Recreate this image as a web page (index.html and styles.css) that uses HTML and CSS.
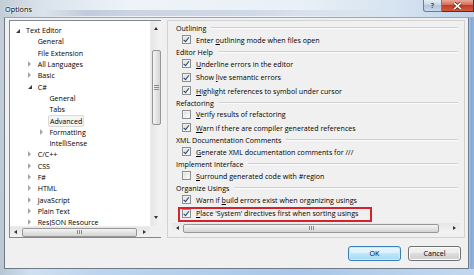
FILE: index.html
```html
<!DOCTYPE html>
<html lang="en">
<head>
    <meta charset="UTF-8">
    <title>Options</title>
    <link rel="stylesheet" href="styles.css">
</head>
<body>
<div class="window">
    <div class="titlebar">
        <span class="title">Options</span>
        <div class="caption">
            <span class="cap-help">?</span>
            <span class="cap-close">
                <svg width="11" height="8" viewBox="0 0 11 8"><path d="M2 0.8 L9 7.2 M9 0.8 L2 7.2" stroke="#6b1d14" stroke-width="3" fill="none"/><path d="M2 0.8 L9 7.2 M9 0.8 L2 7.2" stroke="#fff" stroke-width="1.6" fill="none"/></svg>
            </span>
        </div>
    </div>

    <div class="middle">
        <div class="frame-left"></div>
        <div class="client">
            <div class="panes">
                <!-- 左侧树 -->
                <div class="tree">
                    <div class="tree-view">
                        <div class="node l0"><i class="exp open"></i><span>Text Editor</span></div>
                        <div class="node l1"><i class="exp"></i><span>General</span></div>
                        <div class="node l1"><i class="exp"></i><span>File Extension</span></div>
                        <div class="node l1"><i class="exp shut"></i><span>All Languages</span></div>
                        <div class="node l1"><i class="exp shut"></i><span>Basic</span></div>
                        <div class="node l1"><i class="exp open"></i><span>C#</span></div>
                        <div class="node l2"><i class="exp"></i><span>General</span></div>
                        <div class="node l2"><i class="exp"></i><span>Tabs</span></div>
                        <div class="node l2"><i class="exp"></i><span class="sel">Advanced</span></div>
                        <div class="node l2"><i class="exp shut"></i><span>Formatting</span></div>
                        <div class="node l2"><i class="exp"></i><span>IntelliSense</span></div>
                        <div class="node l1"><i class="exp shut"></i><span>C/C++</span></div>
                        <div class="node l1"><i class="exp shut"></i><span>CSS</span></div>
                        <div class="node l1"><i class="exp shut"></i><span>F#</span></div>
                        <div class="node l1"><i class="exp shut"></i><span>HTML</span></div>
                        <div class="node l1"><i class="exp shut"></i><span>JavaScript</span></div>
                        <div class="node l1"><i class="exp shut"></i><span>Plain Text</span></div>
                        <div class="node l1"><i class="exp shut"></i><span>ResJSON Resource</span></div>
                    </div>
                    <div class="vscroll">
                        <i class="arr up"></i>
                        <div class="vthumb"><b></b><b></b><b></b></div>
                        <i class="arr down"></i>
                    </div>
                    <div class="hscroll tree-h">
                        <i class="arr left"></i>
                        <div class="hthumb"><b></b><b></b><b></b></div>
                        <i class="arr right"></i>
                    </div>
                    <div class="corner"></div>
                </div>

                <!-- 右侧选项页 -->
                <div class="page">
                    <div class="grp">Outlining</div>
                    <div class="opt"><i class="cb on"></i><span>Enter <u>o</u>utlining mode when files open</span></div>

                    <div class="grp">Editor Help</div>
                    <div class="opt"><i class="cb on"></i><span><u>U</u>nderline errors in the editor</span></div>
                    <div class="opt"><i class="cb on"></i><span>Show <u>l</u>ive semantic errors</span></div>
                    <div class="opt"><i class="cb on"></i><span><u>H</u>ighlight references to symbol under cursor</span></div>

                    <div class="grp">Refactoring</div>
                    <div class="opt"><i class="cb"></i><span><u>V</u>erify results of refactoring</span></div>
                    <div class="opt"><i class="cb on"></i><span><u>W</u>arn if there are compiler generated references</span></div>

                    <div class="grp">XML Documentation Comments</div>
                    <div class="opt"><i class="cb on"></i><span><u>G</u>enerate XML documentation comments for ///</span></div>

                    <div class="grp">Implement Interface</div>
                    <div class="opt"><i class="cb"></i><span><u>S</u>urround generated code with #region</span></div>

                    <div class="grp">Organize Usings</div>
                    <div class="opt"><i class="cb on"></i><span>Warn if <u>b</u>uild errors exist when organizing usings</span></div>
                    <div class="opt"><i class="cb on"></i><span><u>P</u>lace 'System' directives first when sorting usings</span></div>

                    <div class="hscroll page-h">
                        <i class="arr left"></i>
                        <div class="hthumb"><b></b><b></b><b></b></div>
                        <i class="arr right"></i>
                    </div>

                    <div class="mark"></div>
                </div>
            </div>

            <div class="buttons">
                <span class="btn default">OK</span>
                <span class="btn">Cancel</span>
            </div>
        </div>
        <div class="frame-right"></div>
    </div>

    <div class="frame-bottom"></div>
</div>
</body>
</html>
```

FILE: styles.css
```css
*{
    padding:0;
    margin:0;
    box-sizing:border-box;
}

body{
    width:474px;
    height:275px;
    overflow:hidden;
    font-family:"Open Sans","Noto Sans",sans-serif;
    font-size:7.1px;
    color:#000;
    background:#c9d6e4;
}

.window{
    width:474px;
    height:275px;
    display:flex;
    flex-direction:column;
}

/* 标题栏 */
.titlebar{
    height:17px;
    display:flex;
    align-items:flex-start;
    background:
        linear-gradient(90deg, rgba(70,90,140,0) 0, rgba(70,90,140,.22) 12%, rgba(70,90,140,.16) 60%, rgba(70,90,140,0) 100%) 45px 10px / 340px 6px no-repeat,
        linear-gradient(90deg, #c3cdd7 0, #d9e2eb 40px, #eef3f8 130px, #e9f0f7 300px, #d3e1ef 410px, #bfd3ea 474px);
}

.title{
    margin:5px 0 0 5px;
    font-size:7.3px;
    line-height:9px;
    text-shadow:0 0 3px #fff, 0 0 2px #fff;
}

.caption{
    margin-left:auto;
    display:flex;
    height:12px;
}

.cap-help{
    width:19px;
    height:12px;
    border:1px solid #6d7c8f;
    border-top:none;
    border-radius:0 0 0 3px;
    background:linear-gradient(#e6eef6, #c4d4e5 50%, #b3c6dc 50%, #c9d9ea);
    color:#3d4a5a;
    font-size:7px;
    font-weight:bold;
    line-height:11px;
    text-align:center;
}

.cap-close{
    width:32px;
    height:12px;
    border:1px solid #5e2a24;
    border-top:none;
    border-left:none;
    background:linear-gradient(#e9a99b, #d66a55 45%, #c23c26 50%, #d05a3f);
    display:flex;
    align-items:center;
    justify-content:center;
}

/* 中间部分 */
.middle{
    height:252px;
    display:flex;
}

.frame-left{
    width:4px;
    background:linear-gradient(#c5ced8, #bcc7d3);
}

.frame-right{
    width:5px;
    background:linear-gradient(90deg, #b9c9da 0, #7fa9dc 2px, #8fb6e4);
}

.frame-bottom{
    height:6px;
    background:linear-gradient(90deg, #b8c6d4 0, #cfe0f1 30px, #bcd4ee 100px, #a9c7ea 300px, #c3d8ef);
}

.client{
    width:465px;
    border:1px solid #6f7a87;
    border-top-color:#9aa7b6;
    background:#f0f0f0;
    padding:2px 3px 0 4px;
    display:flex;
    flex-direction:column;
}

.panes{
    display:flex;
    gap:6px;
    height:218px;
}

/* 树 */
.tree{
    width:152px;
    border:1px solid #828790;
    background:#fff;
    display:grid;
    grid-template-columns:1fr 11px;
    grid-template-rows:1fr 11px;
}

.tree-view{
    overflow:hidden;
    padding-top:3.5px;
}

.node{
    height:11.3px;
    display:flex;
    align-items:center;
    white-space:nowrap;
    line-height:10px;
}

.node.l1{ padding-left:11.7px; }
.node.l2{ padding-left:23.4px; }

.exp{
    width:16px;
    height:8px;
    flex:none;
    display:flex;
    align-items:center;
    justify-content:center;
}

.exp.shut::before{
    content:"";
    width:0;
    height:0;
    border-top:3px solid transparent;
    border-bottom:3px solid transparent;
    border-left:3.5px solid #a6a6a6;
}

.exp.open::before{
    content:"";
    width:0;
    height:0;
    border-left:4px solid transparent;
    border-bottom:4px solid #3b3b3b;
    margin-top:1px;
}

.sel{
    margin-left:-1.5px;
    padding:0 1px;
    border:1px solid #d9d9d9;
    border-radius:2px;
    background:#f5f5f5;
}

/* 滚动条 */
.vscroll{
    background:linear-gradient(90deg, #e6e6e6, #f3f3f3);
    border-left:1px solid #ececec;
    display:flex;
    flex-direction:column;
    align-items:center;
}

.vthumb{
    width:9px;
    height:75px;
    margin-top:16px;
    border:1px solid #979797;
    border-radius:2px;
    background:linear-gradient(90deg, #f4f4f4, #e4e4e4 50%, #d4d4d4);
    display:flex;
    flex-direction:column;
    align-items:center;
    justify-content:center;
    gap:1px;
}

.vthumb b{
    width:5px;
    height:1px;
    background:#8a8a8a;
}

.hscroll{
    display:flex;
    align-items:center;
    background:linear-gradient(#e6e6e6, #f3f3f3);
}

.tree-h{
    border-top:1px solid #ececec;
}

.hthumb{
    height:9px;
    border:1px solid #979797;
    border-radius:2px;
    background:linear-gradient(#f4f4f4, #e4e4e4 50%, #d4d4d4);
    display:flex;
    align-items:center;
    justify-content:center;
    gap:1px;
}

.hthumb b{
    width:1px;
    height:4px;
    background:#8a8a8a;
}

.tree-h .hthumb{
    width:115px;
    margin:0 2px 0 1px;
}

.corner{
    background:#f0f0f0;
}

.arr{
    width:11px;
    height:11px;
    flex:none;
    display:flex;
    align-items:center;
    justify-content:center;
}

.arr::before{
    content:"";
    width:0;
    height:0;
}

.arr.up{ margin-top:2px; }
.arr.up::before{
    border-left:2.5px solid transparent;
    border-right:2.5px solid transparent;
    border-bottom:3px solid #333;
}
.arr.down{ margin-top:auto; margin-bottom:3px; }
.arr.down::before{
    border-left:2.5px solid transparent;
    border-right:2.5px solid transparent;
    border-top:3px solid #333;
}
.arr.left::before{
    border-top:2.5px solid transparent;
    border-bottom:2.5px solid transparent;
    border-right:3px solid #333;
}
.arr.right::before{
    border-top:2.5px solid transparent;
    border-bottom:2.5px solid transparent;
    border-left:3px solid #333;
}

/* 选项页 */
.page{
    width:298px;
    border:1px solid #d2d2d2;
    padding-top:1.6px;
    display:flex;
    flex-direction:column;
    position:relative;
}

.grp{
    height:10.7px;
    display:flex;
    align-items:center;
    padding:0 6px 0 8px;
    white-space:nowrap;
}

.grp::after{
    content:"";
    flex:1;
    margin-left:5px;
    border-top:1px solid #d0d0d0;
    border-bottom:1px solid #fbfbfb;
}

.opt{
    height:13.3px;
    display:flex;
    align-items:center;
    padding-left:14px;
    white-space:nowrap;
}

.cb{
    width:9px;
    height:9px;
    margin-right:5px;
    flex:none;
    border:1px solid #8e8f8f;
    background:linear-gradient(135deg, #d6d9dd, #f6f6f6 70%);
    box-shadow:inset 0 0 0 1px #f0f1f2;
    position:relative;
}

.cb.on::after{
    content:"";
    position:absolute;
    left:2.3px;
    top:0;
    width:2px;
    height:4.5px;
    border:solid #22406e;
    border-width:0 1.4px 1.4px 0;
    transform:rotate(38deg);
}

.page-h{
    height:10px;
    margin:auto 4px 4px;
}

.page-h .arr{
    width:10px;
    height:10px;
}

.page-h .hthumb{
    width:256px;
    margin-left:1px;
}

.page-h .arr.right{
    margin-left:auto;
    margin-right:1px;
}

/* 红色标注框 */
.mark{
    position:absolute;
    left:10px;
    top:185.7px;
    width:194px;
    height:15px;
    border:2px solid #d6222b;
}

/* 按钮 */
.buttons{
    display:flex;
    justify-content:flex-end;
    gap:7px;
    margin-top:8px;
    padding-right:4px;
}

.btn{
    width:53px;
    height:15px;
    border:1px solid #707070;
    border-radius:3px;
    background:linear-gradient(#f2f2f2, #ebebeb 50%, #dddddd 50%, #cfcfcf);
    box-shadow:inset 0 0 0 1px #fbfbfb;
    text-align:center;
    line-height:13px;
}

.btn.default{
    border-color:#3c7fb1;
    background:linear-gradient(#eaf6fd, #d9f0fc 50%, #bee6fd 50%, #a7d9f5);
    box-shadow:inset 0 0 0 1px #cde9f8;
}
```
